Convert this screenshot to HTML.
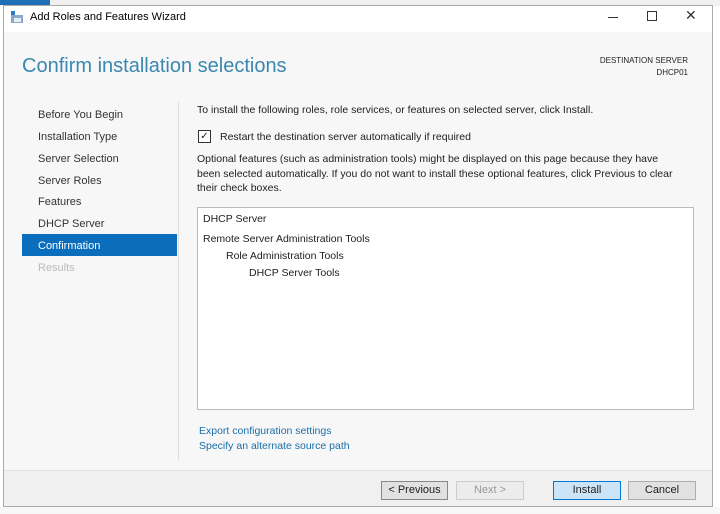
<!DOCTYPE html>
<html><head><style>
body{margin:0;width:720px;height:514px;background:#fff;position:relative;overflow:hidden;font-family:"Liberation Sans",sans-serif;font-size:11px;color:#1e1e1e}
.a{position:absolute;white-space:nowrap}
.win{position:absolute;left:3px;top:5px;width:710px;height:502px;background:#f7f7f7;border:1px solid #aaa;box-sizing:border-box}
.nav{position:absolute;left:38px;font-size:11px;color:#333}
.btn{position:absolute;top:481px;height:19px;border:1px solid #adadad;background:#e1e1e1;box-sizing:border-box;text-align:center;line-height:17px;font-size:11px}
</style></head><body>
<div class="a" style="left:0;top:0;width:720px;height:6px;background:#f0f0f0"></div>
<div class="a" style="left:0;top:0;width:50px;height:5px;background:#1e6fb8"></div>
<div class="a" style="left:0;top:507px;width:720px;height:7px;background:#f7f7f7"></div>
<div class="win"></div>
<div class="a" style="left:4px;top:6px;width:708px;height:26px;background:#fff"></div>
<svg class="a" style="left:10px;top:10px" width="14" height="14"><rect x="1" y="1" width="4" height="4" fill="#2a7cc7"/><rect x="1" y="5" width="12" height="8" fill="#8aa9c6"/><rect x="4" y="8" width="7" height="4" fill="#e5eef6"/></svg>
<div class="a" style="left:30px;top:11px;font-size:11px;color:#000">Add Roles and Features Wizard</div>
<div class="a" style="left:608px;top:17px;width:10px;height:1px;background:#333"></div>
<div class="a" style="left:647px;top:11px;width:8px;height:8px;border:1px solid #333"></div>
<div class="a" style="left:685px;top:7px;font-size:14px;color:#333">✕</div>
<div class="a" style="left:22px;top:55px;font-size:20px;color:#3a87b0;font-weight:300">Confirm installation selections</div>
<div class="a" style="right:32px;top:55px;font-size:8px;text-align:right;color:#222;line-height:12px">DESTINATION SERVER<br>DHCP01</div>
<div class="nav" style="top:109px">Before You Begin</div>
<div class="nav" style="top:131px">Installation Type</div>
<div class="nav" style="top:153px">Server Selection</div>
<div class="nav" style="top:175px">Server Roles</div>
<div class="nav" style="top:196px">Features</div>
<div class="nav" style="top:218px">DHCP Server</div>
<div class="a" style="left:22px;top:234px;width:155px;height:22px;background:#0a6ebd"></div>
<div class="nav" style="top:240px;color:#fff">Confirmation</div>
<div class="nav" style="top:262px;color:#bbb">Results</div>
<div class="a" style="left:178px;top:102px;width:1px;height:358px;background:#ddd"></div>
<div class="a" style="left:197px;top:104px;font-size:10.5px">To install the following roles, role services, or features on selected server, click Install.</div>
<div class="a" style="left:198px;top:130px;width:11px;height:11px;border:1px solid #333;background:#fff;font-size:10px;line-height:11px;text-align:center">✓</div>
<div class="a" style="left:220px;top:131px;font-size:10.5px">Restart the destination server automatically if required</div>
<div class="a" style="left:197px;top:152px;font-size:10.5px;line-height:14.5px">Optional features (such as administration tools) might be displayed on this page because they have<br>been selected automatically. If you do not want to install these optional features, click Previous to clear<br>their check boxes.</div>
<div class="a" style="left:197px;top:207px;width:497px;height:203px;background:#fff;border:1px solid #bbb;box-sizing:border-box"></div>
<div class="a" style="left:203px;top:213px;font-size:10.5px">DHCP Server</div>
<div class="a" style="left:203px;top:233px;font-size:10.5px">Remote Server Administration Tools</div>
<div class="a" style="left:226px;top:250px;font-size:10.5px">Role Administration Tools</div>
<div class="a" style="left:249px;top:267px;font-size:10.5px">DHCP Server Tools</div>
<div class="a" style="left:199px;top:425px;font-size:10.5px;color:#1a6fa8">Export configuration settings</div>
<div class="a" style="left:199px;top:440px;font-size:10.5px;color:#1a6fa8">Specify an alternate source path</div>
<div class="a" style="left:4px;top:470px;width:708px;height:1px;background:#e3e3e3"></div>
<div class="a" style="left:4px;top:471px;width:708px;height:35px;background:#f0f0f0"></div>
<div class="btn" style="left:381px;width:67px;border-color:#888">&lt; Previous</div>
<div class="btn" style="left:456px;width:68px;color:#999;background:#ececec;border-color:#ccc">Next &gt;</div>
<div class="btn" style="left:553px;width:68px;background:#cce4f7;border-color:#0078d7">Install</div>
<div class="btn" style="left:628px;width:68px">Cancel</div>
</body></html>
